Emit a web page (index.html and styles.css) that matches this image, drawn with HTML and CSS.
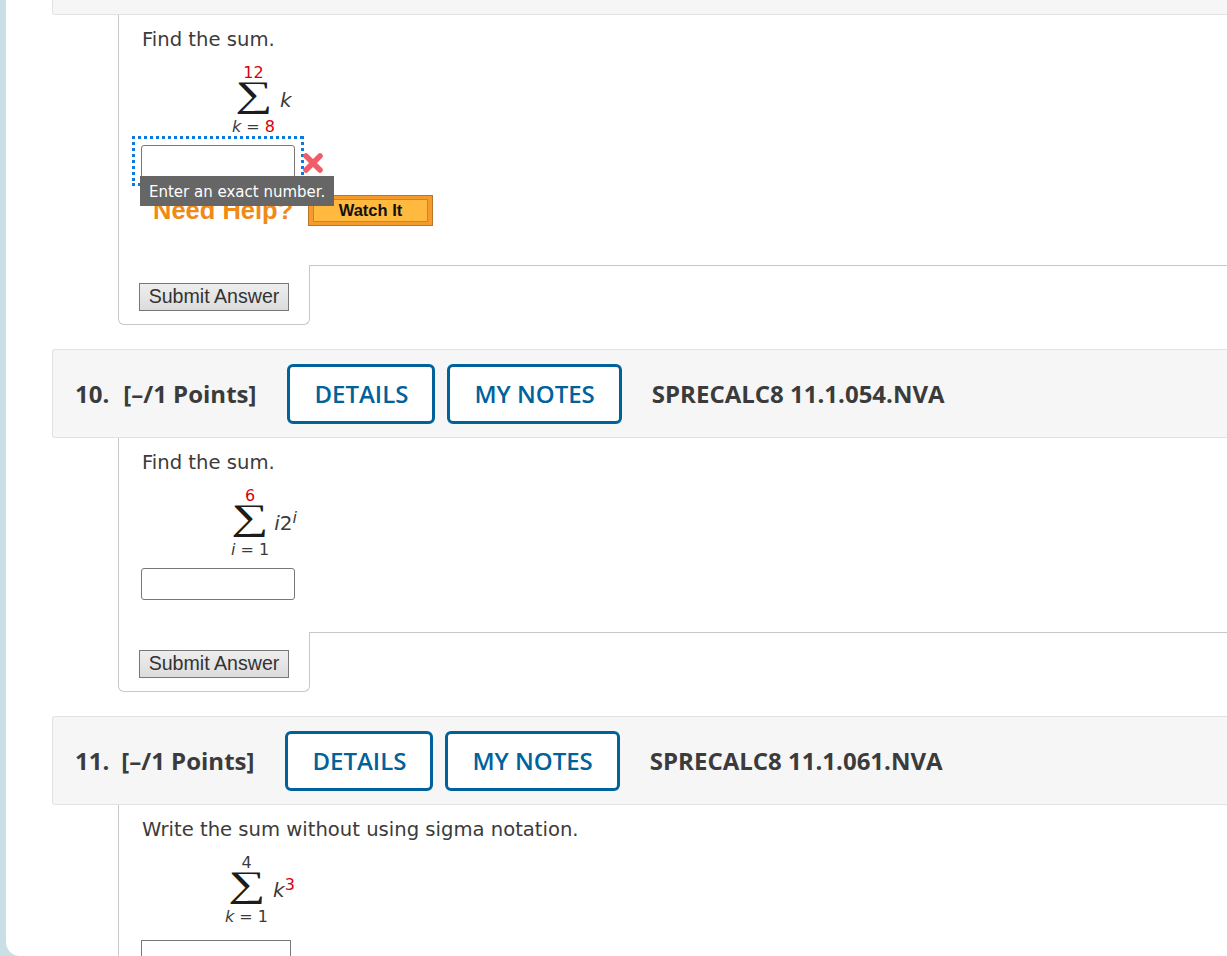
FILE: index.html
```html
<!DOCTYPE html>
<html lang="en">
<head>
    <meta charset="UTF-8">
    <title>Assignment - Sequences and Series</title>
    <link rel="stylesheet" href="styles.css">
</head>
<body>
    <main class="page">
        <!-- Question 9, header scrolled off the top -->
        <div class="q_head q_head_cut"></div>
        <section class="q_body">
            <div class="q_content">
                <p class="q_text">Find the sum.</p>
                <div class="math math_9">
                    <div class="sum_col">
                        <span class="lim red">12</span>
                        <span class="sigma">&sum;</span>
                        <span class="lim"><i>k</i> = <span class="red">8</span></span>
                    </div>
                    <span class="term"><i>k</i></span>
                </div>
                <div class="answer_row">
                    <input type="text" class="answer answer_focus">
                    <svg class="wrong" viewBox="0 0 20 20">
                        <path d="M3 3 L17 17 M17 3 L3 17"></path>
                    </svg>
                    <div class="focus_ring"></div>
                    <div class="tooltip">Enter an exact number.</div>
                </div>
                <div class="help_row">
                    <span class="need_help">Need Help?</span>
                    <button type="button" class="watch"><span>Watch It</span></button>
                </div>
            </div>
            <div class="q_foot">
                <div class="submit_tab"><button type="button" class="submit">Submit Answer</button></div>
                <div class="foot_rule"></div>
            </div>
        </section>

        <!-- Question 10 -->
        <header class="q_head">
            <span class="q_num">10.</span>
            <span class="q_points">[&ndash;/1 Points]</span>
            <button type="button" class="q_btn">DETAILS</button>
            <button type="button" class="q_btn">MY NOTES</button>
            <span class="q_code">SPRECALC8 11.1.054.NVA</span>
        </header>
        <section class="q_body">
            <div class="q_content">
                <p class="q_text">Find the sum.</p>
                <div class="math math_10">
                    <div class="sum_col">
                        <span class="lim red">6</span>
                        <span class="sigma">&sum;</span>
                        <span class="lim"><i>i</i> = 1</span>
                    </div>
                    <span class="term"><i>i</i>2<sup><i>i</i></sup></span>
                </div>
                <div class="answer_row">
                    <input type="text" class="answer">
                </div>
            </div>
            <div class="q_foot">
                <div class="submit_tab"><button type="button" class="submit">Submit Answer</button></div>
                <div class="foot_rule"></div>
            </div>
        </section>

        <!-- Question 11 -->
        <header class="q_head">
            <span class="q_num q_num_narrow">11.</span>
            <span class="q_points">[&ndash;/1 Points]</span>
            <button type="button" class="q_btn">DETAILS</button>
            <button type="button" class="q_btn">MY NOTES</button>
            <span class="q_code">SPRECALC8 11.1.061.NVA</span>
        </header>
        <section class="q_body">
            <div class="q_content">
                <p class="q_text">Write the sum without using sigma notation.</p>
                <div class="math math_11">
                    <div class="sum_col">
                        <span class="lim">4</span>
                        <span class="sigma">&sum;</span>
                        <span class="lim"><i>k</i> = 1</span>
                    </div>
                    <span class="term"><i>k</i><sup class="red">3</sup></span>
                </div>
                <div class="answer_row">
                    <input type="text" class="answer answer_small">
                </div>
            </div>
        </section>
    </main>
</body>
</html>
```
FILE: styles.css
```css
/* Page shell */
html, body {
    margin: 0;
    height: 100%;
}
body {
    background-color: #c8dfe4; /* blue strip on the left */
    font-family: "DejaVu Sans", Verdana, sans-serif;
    color: #3b3b3b;
    overflow: hidden;
}
.page {
    margin-left: 6px;
    height: 956px;
    padding-left: 46px;
    background-color: #fff;
    border-bottom-left-radius: 14px;
    overflow: hidden;
    box-sizing: border-box;
}

/* Question header bar */
.q_head {
    display: flex;
    align-items: center;
    height: 89px;
    box-sizing: border-box;
    padding-left: 22px;
    background-color: #f6f6f6;
    border: 1px solid #e2e2e2;
    border-right: none;
    border-radius: 3px 0 0 3px;
    font-family: "Open Sans", sans-serif;
    font-size: 24px;
    font-weight: 700;
}
.q_head_cut {
    height: 15px;
    border-top: none;
    border-radius: 0 0 0 3px;
}
.q_num {
    margin-right: 14px;
}
.q_num_narrow {
    margin-right: 12px;
}
.q_points {
    margin-right: 31px;
}
.q_btn {
    height: 60px;
    padding: 0 24px;
    margin-right: 12px;
    background-color: #fff;
    border: 3px solid #00629b;
    border-radius: 6px;
    color: #00629b;
    font-family: "Open Sans", sans-serif;
    font-size: 24px;
    font-weight: 600;
}
.q_code {
    margin-left: 18px;
}

/* Question body */
.q_body {
    margin-left: 66px;
    margin-bottom: 24px;
}
.q_content {
    position: relative;
    padding: 13px 0 32px 22px;
    border-left: 1px solid #c8c8c8;
}
.q_text {
    margin: 0;
    padding-left: 1px;
    font-size: 19.6px;
    line-height: 24px;
}

/* Sigma notation */
.math {
    display: flex;
    align-items: center;
    height: 74px;
    margin: 10px 0 9px;
}
.math_9 {
    padding-left: 91px;
}
.math_10 {
    padding-left: 90px;
}
.math_11 {
    padding-left: 84px;
}
.sum_col {
    display: flex;
    flex-direction: column;
    align-items: center;
    padding-top: 1px;
}
.lim {
    font-size: 16px;
    line-height: 18px;
}
.sigma {
    height: 34px;
    margin-bottom: 2px;
    font-family: "Liberation Serif", serif;
    font-size: 36px;
    line-height: 34px;
    color: #1c1c1c;
    transform: translateY(-5px) scaleX(1.45); /* the original symbol is wider than the font's */
}
.term {
    margin: 2px 0 0 5px;
    font-size: 20px;
}
.term sup {
    font-size: 16px;
    line-height: 0;
    vertical-align: 7px;
}
.red {
    color: #d9000d;
}

/* Answer field */
.answer_row {
    position: relative;
    display: flex;
    align-items: center;
}
.answer {
    width: 154px;
    height: 32px;
    padding: 0;
    box-sizing: border-box;
    background-color: #fff;
    border: 1px solid #777;
    border-radius: 3px;
}
.answer_focus {
    height: 33px;
}
.answer_small {
    width: 150px;
    margin-top: 5px;
    border-radius: 0;
}
/* Square dotted focus box around the field */
.focus_ring {
    position: absolute;
    left: -9px;
    top: -9px;
    width: 172px;
    height: 50px;
    background:
        linear-gradient(to right, #0a7ae0 50%, transparent 50%) top left / 6px 3px repeat-x,
        linear-gradient(to right, #0a7ae0 50%, transparent 50%) bottom left / 6px 3px repeat-x,
        linear-gradient(to bottom, #0a7ae0 50%, transparent 50%) top left / 3px 6px repeat-y,
        linear-gradient(to bottom, #0a7ae0 50%, transparent 50%) top right / 3px 6px repeat-y;
}
.wrong {
    position: relative;
    z-index: 1;
    width: 20px;
    height: 20px;
    margin: 2px 0 0 8px;
}
.wrong path {
    fill: none;
    stroke: #f25c68;
    stroke-width: 5.5;
    stroke-linecap: round;
}
.tooltip {
    position: absolute;
    z-index: 2;
    left: -1px;
    top: 31px;
    padding: 1px 9px 0;
    height: 29px;
    background-color: #666;
    color: #fff;
    font-size: 15px;
    line-height: 30px;
    white-space: nowrap;
}

/* Need help row */
.help_row {
    display: flex;
    align-items: center;
    margin: 17px 0 7px 12px;
}
.need_help {
    width: 140px;
    margin-right: 15px;
    font-family: "Liberation Sans", sans-serif;
    font-size: 25.5px;
    font-weight: 700;
    white-space: nowrap;
    color: #f08a16;
}
.watch {
    width: 125px;
    height: 31px;
    padding: 3px 4px;
    box-sizing: border-box;
    background-color: #f59a2c;
    border: 1px solid #b8762a;
}
.watch span {
    display: block;
    height: 100%;
    box-sizing: border-box;
    background-color: #ffb93f;
    border: 1px solid #c9842c;
    color: #111;
    font-family: "Liberation Sans", sans-serif;
    font-size: 16.5px;
    font-weight: 700;
    line-height: 21px;
}

/* Submit tab and rule */
.q_foot {
    display: flex;
}
.submit_tab {
    width: 192px;
    height: 60px;
    padding: 18px 0 0 20px;
    box-sizing: border-box;
    border: 1px solid #c8c8c8;
    border-top: none;
    border-radius: 0 0 6px 6px;
}
.foot_rule {
    flex: 1;
    border-top: 1px solid #c8c8c8;
}
.submit {
    width: 150px;
    height: 28px;
    padding: 0 0 2px;
    background: linear-gradient(#eeeeee, #dcdcdc);
    border: 1px solid #777;
    color: #333;
    font-family: "Liberation Sans", sans-serif;
    font-size: 19.6px;
}
```
